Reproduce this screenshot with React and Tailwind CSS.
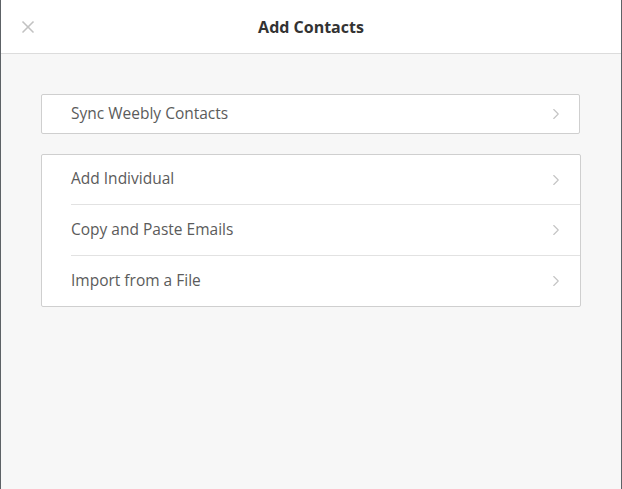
import { ChevronRight, X } from "lucide-react";

const rows = ["Add Individual", "Copy and Paste Emails", "Import from a File"];

function Chevron() {
  return <ChevronRight size={18} strokeWidth={1.5} className="text-[#c4c4c4]" />;
}

export default function App() {
  return (
    <div
      className="w-[622px] h-[489px] flex flex-col bg-[#f7f7f7] border-x border-[#5d6266] overflow-hidden"
      style={{ fontFamily: "'Open Sans', Lato, sans-serif" }}
    >
      {/* header */}
      <div className="relative h-[54px] shrink-0 bg-white border-b border-[#dcdcdc] flex items-center justify-center">
        <button className="absolute left-[17px] top-[17px] text-[#c2c2c2]" aria-label="Close">
          <X size={20} strokeWidth={2} />
        </button>
        <h1 className="text-[16px] font-bold text-[#333]">Add Contacts</h1>
      </div>

      <div className="flex flex-col pl-[40px] pt-[40px] gap-[20px]">
        <div className="w-[539px] h-[40px] bg-white border border-[#cfcfcf] rounded-[2px] flex items-center justify-between pl-[29px] pr-[14px]">
          <span className="text-[15.5px] text-[#5b5b5b] mb-[1px]">Sync Weebly Contacts</span>
          <Chevron />
        </div>

        <div className="w-[540px] bg-white border border-[#cfcfcf] rounded-[2px] flex flex-col">
          {rows.map((label, i) => (
            <div key={label} className="flex flex-col">
              {i > 0 && <div className="ml-[29px] h-px bg-[#e2e2e2]" />}
              <div
                className={`${i === 0 ? "h-[49px]" : "h-[50px]"} flex items-center justify-between pl-[29px] pr-[15px]`}
              >
                <span className="text-[15.5px] text-[#5b5b5b] mb-[1px]">{label}</span>
                <Chevron />
              </div>
            </div>
          ))}
        </div>
      </div>
    </div>
  );
}
